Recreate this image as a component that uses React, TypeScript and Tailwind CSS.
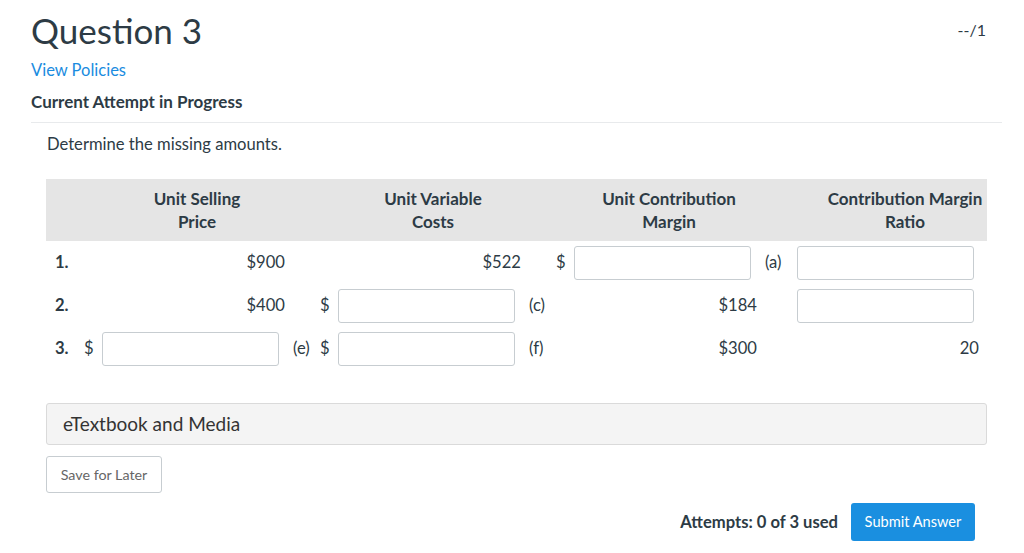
const font = { fontFamily: 'Lato, "Noto Sans", sans-serif' }

type Cell =
  | { kind: 'input'; dollar?: boolean; suffix?: string }
  | { kind: 'text'; value: string; suffix?: string }

const headers = [
  ['Unit Selling', 'Price'],
  ['Unit Variable', 'Costs'],
  ['Unit Contribution', 'Margin'],
  ['Contribution Margin', 'Ratio'],
]

const rows: { label: string; cells: Cell[] }[] = [
  {
    label: '1.',
    cells: [
      { kind: 'text', value: '$900' },
      { kind: 'text', value: '$522' },
      { kind: 'input', dollar: true, suffix: '(a)' },
      { kind: 'input' },
    ],
  },
  {
    label: '2.',
    cells: [
      { kind: 'text', value: '$400' },
      { kind: 'input', dollar: true, suffix: '(c)' },
      { kind: 'text', value: '$184' },
      { kind: 'input' },
    ],
  },
  {
    label: '3.',
    cells: [
      { kind: 'input', dollar: true, suffix: '(e)' },
      { kind: 'input', dollar: true, suffix: '(f)' },
      { kind: 'text', value: '$300' },
      { kind: 'text', value: '20' },
    ],
  },
]

function AmountCell({ cell }: { cell: Cell }) {
  return (
    <div className="flex w-[236px] items-center">
      <div className="w-[23px] pl-[5px]">{cell.kind === 'input' && cell.dollar ? '$' : ''}</div>
      <div className="flex w-[183px] items-center justify-end">
        {cell.kind === 'input' ? (
          <input className="mr-auto h-[34px] w-[177px] rounded-[3px] border border-[#c7cdd1] bg-white" />
        ) : (
          <span>{cell.value}</span>
        )}
      </div>
      <div className="pl-[8px]">{cell.suffix ?? ''}</div>
    </div>
  )
}

function RatioCell({ cell }: { cell: Cell }) {
  return (
    <div className="flex w-[236px] items-center pl-[10px]">
      <div className="flex w-[182px] items-center justify-end">
        {cell.kind === 'input' ? (
          <input className="mr-auto h-[34px] w-[177px] rounded-[3px] border border-[#c7cdd1] bg-white" />
        ) : (
          <span>{cell.value}</span>
        )}
      </div>
    </div>
  )
}

export default function App() {
  return (
    <div className="min-h-[553px] bg-white pl-[31px] pr-[22px] pt-[8px] text-[#2d3b45]" style={font}>
      <div className="flex items-start justify-between pr-[16px]">
        <h1 className="text-[35px] font-normal leading-[44px]">Question 3</h1>
        <div className="pt-[10px] text-[16px]">--/1</div>
      </div>
      <a className="mt-[6px] block text-[16.5px] leading-[24px] text-[#1a8ce0]">View Policies</a>
      <div className="mt-[8px] text-[17px] font-bold leading-[24px]">Current Attempt in Progress</div>
      <div className="mt-[8px] border-t border-[#e8eaec]" />

      <div className="pl-[15px]">
        <p className="mt-[9px] pl-[1px] text-[16.6px] leading-[24px]">Determine the missing amounts.</p>

        <div className="mt-[23px] w-[941px] overflow-hidden text-[16.6px]">
          <div className="w-[977px]">
            <div className="flex w-[941px] bg-[#e5e5e5] py-[8px] text-[17px] font-bold leading-[23px]">
              <div className="w-[33px] shrink-0" />
              {headers.map((h, i) => (
                <div key={i} className="w-[236px] shrink-0 text-center">
                  {h[0]}
                  <br />
                  {h[1]}
                </div>
              ))}
            </div>
            {rows.map((r) => (
              <div key={r.label} className="flex h-[43px] items-center">
                <div className="w-[33px] shrink-0 pl-[9px] font-bold">{r.label}</div>
                <AmountCell cell={r.cells[0]} />
                <AmountCell cell={r.cells[1]} />
                <AmountCell cell={r.cells[2]} />
                <RatioCell cell={r.cells[3]} />
              </div>
            ))}
          </div>
        </div>

        <div className="mt-[33px] flex h-[42px] w-[941px] items-center rounded-[3px] border border-[#dadada] bg-[#f4f4f4] pl-[16px] text-[19px] text-[#333]">
          eTextbook and Media
        </div>

        <button className="mt-[11px] h-[37px] w-[116px] rounded-[3px] border border-[#c7cdd1] bg-white text-[14.3px] text-[#666]">
          Save for Later
        </button>

        <div className="mt-[10px] flex w-[929px] items-center justify-end gap-[13px]">
          <span className="text-[16.6px] font-bold">Attempts: 0 of 3 used</span>
          <button className="h-[38px] w-[124px] rounded-[3px] bg-[#1a8fe0] text-[14.6px] text-white">
            Submit Answer
          </button>
        </div>
      </div>
    </div>
  )
}
